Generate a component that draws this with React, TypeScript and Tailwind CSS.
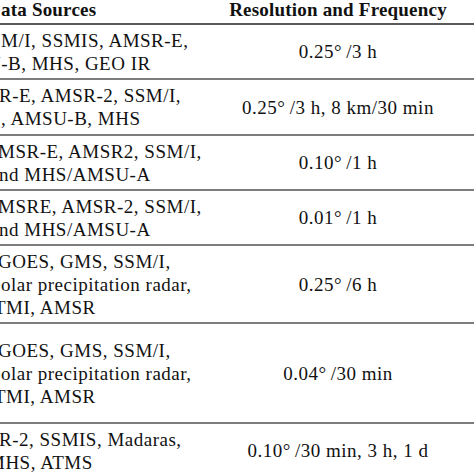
type Line = { text: string; shift: string };

type Row = {
  height: string;
  lines: Line[];
  value: string;
};

const rows: Row[] = [
  {
    height: "h-[55px]",
    lines: [
      { text: "SM/I, SSMIS, AMSR-E,", shift: "-ml-[10px]" },
      { text: "U-B, MHS, GEO IR", shift: "-ml-[13px]" },
    ],
    value: "0.25°\u2009/3 h",
  },
  {
    height: "h-[56px]",
    lines: [
      { text: "R-E, AMSR-2, SSM/I,", shift: "-ml-[1px]" },
      { text: ", AMSU-B, MHS", shift: "ml-[1px]" },
    ],
    value: "0.25°\u2009/3 h, 8 km/30 min",
  },
  {
    height: "h-[55px]",
    lines: [
      { text: "MSR-E, AMSR2, SSM/I,", shift: "-ml-[2px]" },
      { text: "nd MHS/AMSU-A", shift: "-ml-[1px]" },
    ],
    value: "0.10°\u2009/1 h",
  },
  {
    height: "h-[55px]",
    lines: [
      { text: "MSRE, AMSR-2, SSM/I,", shift: "-ml-[2px]" },
      { text: "nd MHS/AMSU-A", shift: "-ml-[1px]" },
    ],
    value: "0.01°\u2009/1 h",
  },
  {
    height: "h-[78px]",
    lines: [
      { text: "GOES, GMS, SSM/I,", shift: "-ml-[2px]" },
      { text: "polar precipitation radar,", shift: "-ml-[9px]" },
      { text: "TMI, AMSR", shift: "-ml-[6px]" },
    ],
    value: "0.25°\u2009/6 h",
  },
  {
    height: "h-[100px]",
    lines: [
      { text: "GOES, GMS, SSM/I,", shift: "-ml-[2px]" },
      { text: "polar precipitation radar,", shift: "-ml-[9px]" },
      { text: "TMI, AMSR", shift: "-ml-[6px]" },
    ],
    value: "0.04°\u2009/30 min",
  },
  {
    height: "h-[55px]",
    lines: [
      { text: "R-2, SSMIS, Madaras,", shift: "-ml-[1px]" },
      { text: "MHS, ATMS", shift: "-ml-[12px]" },
    ],
    value: "0.10°\u2009/30 min, 3 h, 1 d",
  },
];

export default function App() {
  return (
    <div className="w-[474px] h-[474px] overflow-hidden bg-white text-[#111111] font-['Liberation_Serif',serif] text-[19px] leading-[23px] tracking-[0.5px]">
      {/* Header */}
      <div className="flex h-[25px] border-b-2 border-[#5a5a5a] font-bold tracking-[0.2px]">
        <div className="w-[202px] overflow-hidden">
          <div className="leading-[20px] whitespace-nowrap ml-[1px]">ata Sources</div>
        </div>
        <div className="flex-1 text-center leading-[20px] whitespace-nowrap">
          Resolution and Frequency
        </div>
      </div>

      {rows.map((row, i) => (
        <div
          key={i}
          className={`flex items-center border-b-2 border-[#7c7c7c] ${row.height}`}
        >
          <div className="w-[202px] overflow-hidden">
            {row.lines.map((line, j) => (
              <div key={j} className={`whitespace-nowrap ${line.shift}`}>
                {line.text}
              </div>
            ))}
          </div>
          <div className="flex-1 text-center whitespace-nowrap">{row.value}</div>
        </div>
      ))}
    </div>
  );
}
